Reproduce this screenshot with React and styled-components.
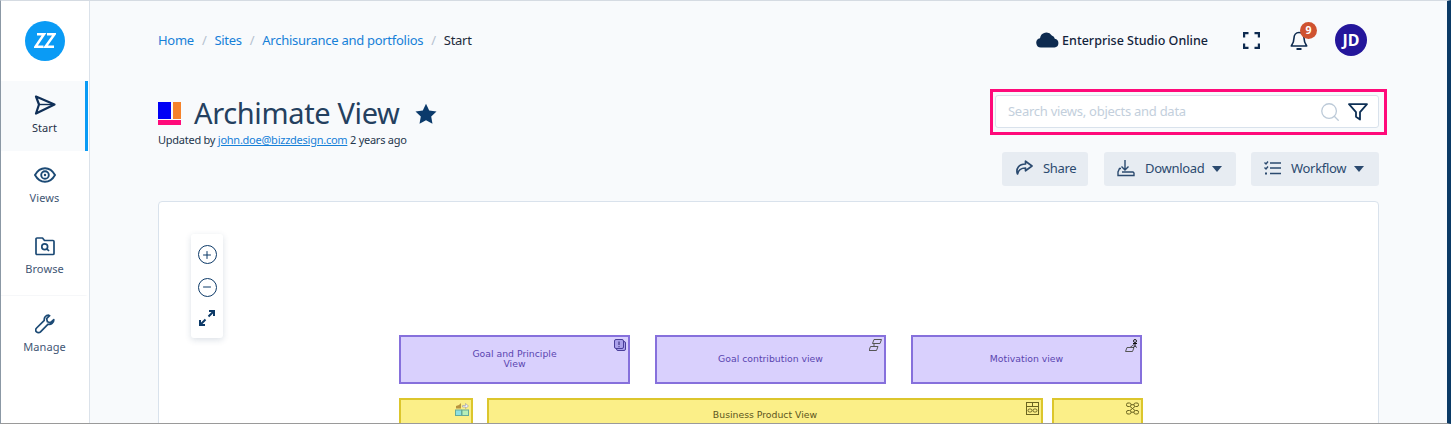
import styled, { createGlobalStyle } from 'styled-components'
import { Search, Plus, Minus } from 'lucide-react'

const GlobalStyle = createGlobalStyle`
  html, body { margin: 0; padding: 0; height: 100%; overflow: hidden; }
  body { font-family: "Noto Sans", "Open Sans", sans-serif; color: #1b2a41; }
`

const navItems = [
  { label: 'Start', icon: <SendIcon />, active: true, pad: 13 },
  { label: 'Views', icon: <EyeIcon />, pad: 13 },
  { label: 'Browse', icon: <BrowseIcon />, divider: true, pad: 14 },
  { label: 'Manage', icon: <WrenchIcon />, pad: 17 },
]

const nodes = [
  { x: 240, y: 133, w: 231, h: 49, color: 'purple', label: 'Goal and Principle\nView', glyph: 'note' },
  { x: 496, y: 133, w: 231, h: 49, color: 'purple', label: 'Goal contribution view', glyph: 'steps' },
  { x: 752, y: 133, w: 231, h: 49, color: 'purple', label: 'Motivation view', glyph: 'actor' },
  { x: 240, y: 196, w: 74, h: 50, color: 'yellow', glyph: 'mixed' },
  { x: 328, y: 196, w: 556, h: 50, color: 'yellow', label: 'Business Product View', glyph: 'product' },
  { x: 893, y: 196, w: 91, h: 50, color: 'yellow', glyph: 'network' },
]

function SendIcon() {
  return (
    <svg width="22" height="20" viewBox="0 0 22 20" fill="none" stroke="#0f2f57" strokeWidth="2.200" strokeLinejoin="round">
      <path d="M2 1.500L20.500 9.500 2 18.500 5 9.500z" />
      <path d="M5 9.500h15" strokeWidth="1.400" />
    </svg>
  )
}

function EyeIcon() {
  return (
    <svg width="22" height="16" viewBox="0 0 22 16" fill="none" stroke="#1c4a75" strokeWidth="1.900">
      <path d="M1 8c2.500-4.500 6-6.800 10-6.800S18.500 3.500 21 8c-2.500 4.500-6 6.800-10 6.800S3.500 12.500 1 8z" />
      <circle cx="11" cy="8" r="3.800" />
      <circle cx="11" cy="8" r="1.200" fill="#1c4a75" stroke="none" />
    </svg>
  )
}

function BrowseIcon() {
  return (
    <svg width="20" height="19" viewBox="0 0 20 19" fill="none" stroke="#1c4a75" strokeWidth="1.700">
      <path d="M1 2a1 1 0 0 1 1-1h5.500l2 2.500H18a1 1 0 0 1 1 1V16.500a1 1 0 0 1-1 1H2a1 1 0 0 1-1-1z" strokeLinejoin="round" />
      <circle cx="9.700" cy="9.700" r="2.900" />
      <path d="M11.800 11.800l2.200 2.200" />
    </svg>
  )
}

function WrenchIcon() {
  return (
    <svg width="20" height="20" viewBox="0 0 20 20" fill="none" stroke="#1c4a75" strokeWidth="1.700" strokeLinejoin="round">
      <path d="M13.500 1.200c-2.700 0-4.700 2.400-4.200 5.100L1.600 14a2.700 2.700 0 0 0 3.900 3.900l7.600-7.700c3 .8 5.800-1.600 5.700-4.500l-3.300 3-3.100-1-.8-3.100 3-2.900c-.6-.3-1.300-.500-1.100-.500z" />
    </svg>
  )
}

function ShareIcon() {
  return (
    <svg width="18" height="15" viewBox="0 0 18 15" fill="none" stroke="currentColor" strokeWidth="1.700" strokeLinejoin="round">
      <path d="M10.500 1.200L17 6l-6.500 4.800V8C6 8 3.500 9.500 2.500 14 .5 8.500 4 4 10.500 4z" />
    </svg>
  )
}

function DownloadIcon() {
  return (
    <svg width="18" height="18" viewBox="0 0 18 18" fill="none" stroke="currentColor" strokeWidth="1.400">
      <path d="M8 1v10M4.500 7.500L8 11l3.500-3.500M4 9.500H2.500L1 13v3.500h16V14l-1-1H5" />
    </svg>
  )
}

function WorkflowIcon() {
  return (
    <svg width="17" height="14" viewBox="0 0 17 14" fill="none" stroke="currentColor" strokeWidth="1.400">
      <path d="M6 2h11M6 7h11M6 12.500h11" />
      <path d="M.5 1.500L2 3l2-2.500M.5 6.500L2 8l2-2.500" />
      <path d="M1 12.500h2" strokeWidth="2" />
    </svg>
  )
}

function FilterIcon() {
  return (
    <svg width="20" height="18" viewBox="0 0 20 18" fill="none" stroke="#0d2f55" strokeWidth="1.800" strokeLinejoin="round">
      <path d="M1 1.200h18l-7 8v7.300l-4-2.800V9.200z" />
    </svg>
  )
}

function BellIcon() {
  return (
    <svg width="18" height="20" viewBox="0 0 18 20" fill="none" stroke="#0d2a4f" strokeWidth="1.600" strokeLinejoin="round">
      <path d="M9 1.500c-3.200 0-5 2.600-5 5.500 0 4-1.400 6-2.700 8h15.400C15.400 13 14 11 14 7c0-2.900-1.800-5.500-5-5.500z" />
      <path d="M6.500 18h5" strokeWidth="2" />
    </svg>
  )
}

function Logo() {
  return (
    <LogoDisc>
      <svg width="22" height="15" viewBox="0 0 22 15" fill="none" stroke="#fff" strokeWidth="2.500">
        <path d="M3 1.300h7L1.500 13.700h8" />
        <path d="M13 1.300h7.500L11.500 13.700h8.500" />
      </svg>
    </LogoDisc>
  )
}

function NodeGlyph({ kind }) {
  const line = '#4a3f9a'
  if (kind === 'note') {
    return (
      <svg width="12" height="12" viewBox="0 0 12 12">
        <rect x="2.500" y="2.500" width="9" height="9" rx="1.500" fill="#aaa0ea" stroke={line} />
        <rect x="0.500" y="0.500" width="9" height="9" rx="1.500" fill="#aaa0ea" stroke={line} />
        <path d="M5 2.500v3.500M5 7.200v1" stroke="#2a2070" />
      </svg>
    )
  }
  if (kind === 'steps') {
    return (
      <svg width="13" height="12" viewBox="0 0 13 12" fill="none" stroke="#555">
        <path d="M5 .5h7.500l-1.500 4H3.500zM1.500 7.500H9l-1.500 4H0zM5 4.500v3" />
      </svg>
    )
  }
  if (kind === 'actor') {
    return (
      <svg width="13" height="13" viewBox="0 0 13 13" fill="none" stroke="#555">
        <path d="M2 8.500h7l-1.500 4H.5zM5 8.500l4-3" />
        <circle cx="10" cy="2" r="1.500" stroke="#222" />
        <path d="M10 3.500v3M8 4.500h4M10 6.500l-1.500 2M10 6.500l1.500 2" stroke="#111" />
      </svg>
    )
  }
  if (kind === 'mixed') {
    return (
      <svg width="14" height="14" viewBox="0 0 14 14">
        <rect x="0.500" y="8" width="6" height="5.500" fill="#8ee0e0" stroke="#6a9" />
        <rect x="7" y="8" width="6.500" height="5.500" fill="#b7efb7" stroke="#6a9" />
        <path d="M1 6.500V4l3-1 2-2v5.500z" fill="#b8943e" />
        <path d="M7.500 3.500h3V1.500l3 2.500-3 2.500V5h-3z" fill="#eef" stroke="#999" strokeWidth=".6" />
      </svg>
    )
  }
  if (kind === 'product') {
    return (
      <svg width="13" height="13" viewBox="0 0 13 13" fill="none" stroke="#6b6420">
        <rect x=".5" y=".5" width="12" height="12" />
        <path d="M.5 4.500h12M6.500.5v4" />
        <rect x="2" y="7" width="4" height="3" rx="1.500" />
        <rect x="7" y="7" width="4" height="3" rx="1.500" />
      </svg>
    )
  }
  return (
    <svg width="13" height="13" viewBox="0 0 13 13" fill="none" stroke="#6b6420">
      <rect x=".5" y="1" width="4.500" height="3.500" rx="1.500" />
      <rect x="8" y="1" width="4.500" height="3.500" rx="1.500" />
      <rect x=".5" y="8.500" width="4.500" height="3.500" rx="1.500" />
      <rect x="8" y="8.500" width="4.500" height="3.500" rx="1.500" />
      <path d="M5 2.700h3M5 10.200h3M4 4.500l5 4M9 4.500l-5 4" />
    </svg>
  )
}

function FullscreenIcon() {
  return (
    <svg width="17" height="17" viewBox="0 0 17 17" fill="none" stroke="#0d2a4f" strokeWidth="2.200">
      <path d="M1.100 5.500V1.100h4.400M11.500 1.100h4.400v4.400M15.900 11.500v4.400h-4.400M5.500 15.900H1.100v-4.400" />
    </svg>
  )
}

export default function App() {
  return (
    <>
      <GlobalStyle />
      <Frame>
        <Sidebar>
          <LogoSlot><Logo /></LogoSlot>
          {navItems.map((item) => (
            <NavItem key={item.label} $active={item.active} $divider={item.divider} $pad={item.pad}>
              <NavIcon>{item.icon}</NavIcon>
              <NavLabel $active={item.active}>{item.label}</NavLabel>
            </NavItem>
          ))}
        </Sidebar>
        <Main>
          <TopBar>
            <Breadcrumb>
              <Crumb>Home</Crumb><Sep>/</Sep>
              <Crumb>Sites</Crumb><Sep>/</Sep>
              <Crumb>Archisurance and portfolios</Crumb><Sep>/</Sep>
              <Current>Start</Current>
            </Breadcrumb>
            <TopRight>
              <Product>
                <svg width="23" height="18" viewBox="0 0 23 18" fill="#0d2a4f">
                  <path d="M5 17.500a4.700 4.700 0 0 1-1-9.300A6.500 6.500 0 0 1 15.800 5.500a4 4 0 0 1 3 3.300A4.400 4.400 0 0 1 18.500 17.500z" />
                </svg>
                Enterprise Studio Online
              </Product>
              <FullscreenIcon />
              <BellWrap>
                <BellIcon />
                <Badge>9</Badge>
              </BellWrap>
              <Avatar>JD</Avatar>
            </TopRight>
          </TopBar>
          <HeadRow>
            <TitleBlock>
              <TitleLine>
                <ViewMark><i /><i /><i /></ViewMark>
                <Title>Archimate View</Title>
                <svg width="22" height="21" viewBox="0 0 24 23" fill="#0b3a6b">
                  <path d="M12 .8l3.500 7.300 8 1.100-5.800 5.600 1.400 8L12 19l-7.100 3.800 1.400-8L.5 9.200l8-1.100z" />
                </svg>
              </TitleLine>
              <Updated>Updated by <a href="#top">john.doe@bizzdesign.com</a> 2 years ago</Updated>
            </TitleBlock>
            <Highlight>
              <SearchBox>
                <Placeholder>Search views, objects and data</Placeholder>
                <Search size={22} strokeWidth={1.4} color="#bccad8" />
                <FilterIcon />
              </SearchBox>
            </Highlight>
          </HeadRow>
          <Actions>
            <ActionButton $w={86}><ShareIcon />Share</ActionButton>
            <ActionButton $w={132}><DownloadIcon />Download<Caret /></ActionButton>
            <ActionButton $w={128}><WorkflowIcon />Workflow<Caret /></ActionButton>
          </Actions>
          <Card>
            <ZoomBar>
              <ZoomCircle><Plus size={12} strokeWidth={2} /></ZoomCircle>
              <ZoomCircle><Minus size={12} strokeWidth={2} /></ZoomCircle>
              <svg width="16" height="16" viewBox="0 0 16 16" fill="none" stroke="#0d3a68" strokeWidth="2">
                <path d="M9.500 6.500L14.500 1.500M10 1h5v5M6.500 9.500l-5 5M1 10v5h5" />
              </svg>
            </ZoomBar>
            {nodes.map((n) => (
              <DiagramNode key={n.x + '-' + n.y} $x={n.x} $y={n.y} $w={n.w} $h={n.h} $color={n.color}>
                {n.label}
                <GlyphSlot><NodeGlyph kind={n.glyph} /></GlyphSlot>
              </DiagramNode>
            ))}
          </Card>
        </Main>
      </Frame>
    </>
  )
}

const Caret = styled.span`
  width: 0;
  height: 0;
  border-left: 5.500px solid transparent;
  border-right: 5.500px solid transparent;
  border-top: 6px solid #2b4a6f;
  margin-left: -2px;
  margin-top: 3px;
`

const Frame = styled.div`
  display: flex;
  width: 1451px;
  height: 424px;
  box-sizing: border-box;
  background: #f8fafc;
  border-left: 1px solid #8b98a5;
  border-right: 4px solid #0b3a66;
  border-bottom: 1px solid #9a9a9a;
  border-top: 1px solid #d5dbe2;
  overflow: hidden;
`

const Sidebar = styled.aside`
  flex: 0 0 89px;
  box-sizing: border-box;
  background: #fff;
  border-right: 1px solid #dbe2ea;
`

const LogoSlot = styled.div`
  height: 80px;
  display: flex;
  align-items: center;
  justify-content: center;
`

const LogoDisc = styled.div`
  width: 40px;
  height: 40px;
  margin-top: -1px;
  border-radius: 50%;
  background: #0a9bf5;
  display: flex;
  align-items: center;
  justify-content: center;
`

const NavItem = styled.div`
  height: ${(p) => (p.$divider ? 75 : 70)}px;
  box-sizing: border-box;
  display: flex;
  flex-direction: column;
  align-items: center;
  gap: 4px;
  padding: ${(p) => p.$pad}px 0 0 3px;
  background: ${(p) => (p.$active ? '#f8fafc' : '#fff')};
  border-right: 3px solid ${(p) => (p.$active ? '#0a9bf5' : 'transparent')};
  margin-right: 1px;
  border-bottom: ${(p) => (p.$divider ? '1px solid #f6f7f9' : '0')};
`

const NavIcon = styled.div`
  height: 22px;
  display: flex;
  align-items: center;
  justify-content: center;
`

const NavLabel = styled.span`
  font-size: 11px;
  line-height: 16px;
  letter-spacing: 0.1px;
  color: ${(p) => (p.$active ? '#1f3148' : '#3f5674')};
`

const Main = styled.main`
  flex: 1;
  min-width: 0;
  padding: 0 68px;
`

const TopBar = styled.header`
  height: 79px;
  display: flex;
  align-items: center;
  justify-content: space-between;
`

const Breadcrumb = styled.nav`
  display: flex;
  align-items: center;
  margin-top: -2px;
  font-size: 13px;
  letter-spacing: -0.28px;
`

const Crumb = styled.a`
  color: #1680d8;
`

const Sep = styled.span`
  color: #b5c1cf;
  margin: 0 8px;
`

const Current = styled.span`
  color: #1d2b3c;
`

const TopRight = styled.div`
  display: flex;
  align-items: center;
  gap: 34px;
  margin-right: 12px;
`

const Product = styled.div`
  display: flex;
  align-items: center;
  gap: 3px;
  margin-right: 1px;
  font-size: 12.500px;
  font-weight: 500;
  color: #12233b;
  svg { margin-top: -3px; }
`

const BellWrap = styled.div`
  position: relative;
  display: flex;
  margin-left: -4px;
  margin-right: -7px;
`

const Badge = styled.span`
  position: absolute;
  top: -9px;
  left: 10px;
  width: 17px;
  height: 17px;
  border-radius: 50%;
  background: #cf5230;
  color: #fff;
  font-size: 10.500px;
  font-weight: 700;
  line-height: 17px;
  text-align: center;
`

const Avatar = styled.div`
  width: 32px;
  height: 32px;
  margin-top: -1px;
  border-radius: 50%;
  background: #24169b;
  color: #fff;
  font-size: 16px;
  font-weight: 700;
  line-height: 32px;
  text-align: center;
`

const HeadRow = styled.div`
  display: flex;
  justify-content: space-between;
  align-items: flex-start;
  height: 64px;
  margin-right: -8px;
  padding-top: 9px;
  margin-bottom: -1px;
`

const TitleBlock = styled.div`
  padding-top: 6px;
`

const TitleLine = styled.div`
  display: flex;
  align-items: center;
  margin-bottom: 1px;
`

const ViewMark = styled.div`
  display: grid;
  grid-template-columns: 13px 8px;
  grid-template-rows: 17px 5px;
  column-gap: 2px;
  row-gap: 1px;
  margin-right: 13px;
  i:nth-child(1) { background: #0000f5; }
  i:nth-child(2) { background: #f5822a; }
  i:nth-child(3) { background: #ff0a7a; grid-column: 1 / 3; }
`

const Title = styled.h1`
  margin: 0 15px 0 0;
  font-size: 29px;
  font-weight: 400;
  line-height: 36px;
  letter-spacing: -0.35px;
  color: #24405f;
`

const Updated = styled.div`
  font-size: 11px;
  line-height: 16px;
  letter-spacing: -0.25px;
  color: #24364d;
  a { color: #1680d8; }
`

const Highlight = styled.div`
  width: 397px;
  height: 46px;
  box-sizing: border-box;
  border: 3px solid #ff0a7a;
  padding: 3px 5px 4px 2px;
`

const SearchBox = styled.div`
  height: 100%;
  box-sizing: border-box;
  display: flex;
  align-items: center;
  gap: 7px;
  padding: 0 10px 0 12px;
  background: #fff;
  border: 1px solid #d9e2ec;
  border-radius: 3px;
`

const Placeholder = styled.span`
  flex: 1;
  margin-top: -2px;
  font-size: 13px;
  letter-spacing: -0.27px;
  color: #c3cfdc;
`

const Actions = styled.div`
  display: flex;
  justify-content: flex-end;
  gap: 16px;
  height: 50px;
  button:last-child { margin-left: -1px; }
`

const ActionButton = styled.button`
  width: ${(p) => p.$w}px;
  height: 34px;
  box-sizing: border-box;
  display: flex;
  align-items: center;
  gap: 10px;
  padding: 0 0 3px 13px;
  border: 0;
  border-radius: 3px;
  background: #e7ecf2;
  color: #2b4a6f;
  font: 400 13px "Noto Sans", sans-serif;
  letter-spacing: -0.3px;
`

const Card = styled.section`
  position: relative;
  height: 300px;
  margin-top: -1px;
  background: #fff;
  border: 1px solid #d9e2ec;
  border-radius: 4px;
`

const ZoomBar = styled.div`
  position: absolute;
  left: 32px;
  top: 32px;
  width: 32px;
  height: 104px;
  display: flex;
  flex-direction: column;
  align-items: center;
  justify-content: space-between;
  padding: 11px 0 12px;
  box-sizing: border-box;
  background: #fff;
  border-radius: 3px;
  box-shadow: 0 2px 6px rgba(30, 60, 100, 0.16);
`

const ZoomCircle = styled.span`
  width: 17px;
  height: 17px;
  display: flex;
  align-items: center;
  justify-content: center;
  border: 1.700px solid #0d3a68;
  border-radius: 50%;
  color: #0d3a68;
`

const DiagramNode = styled.div`
  position: absolute;
  left: ${(p) => p.$x}px;
  top: ${(p) => p.$y}px;
  width: ${(p) => p.$w}px;
  height: ${(p) => p.$h}px;
  box-sizing: border-box;
  display: flex;
  align-items: ${(p) => (p.$color === 'purple' ? 'center' : 'flex-start')};
  justify-content: center;
  padding: ${(p) => (p.$color === 'purple' ? '0 0 2px' : '10px 0 0')};
  white-space: pre-line;
  text-align: center;
  font: 9.300px/9.500px "DejaVu Sans", sans-serif;
  color: ${(p) => (p.$color === 'purple' ? '#5a45b0' : '#5c5620')};
  background: ${(p) => (p.$color === 'purple' ? '#d9d0fd' : '#fbef88')};
  border: 2px solid ${(p) => (p.$color === 'purple' ? '#8670dc' : '#dcc62c')};
`

const GlyphSlot = styled.span`
  position: absolute;
  top: 2px;
  right: 2px;
  display: flex;
`
